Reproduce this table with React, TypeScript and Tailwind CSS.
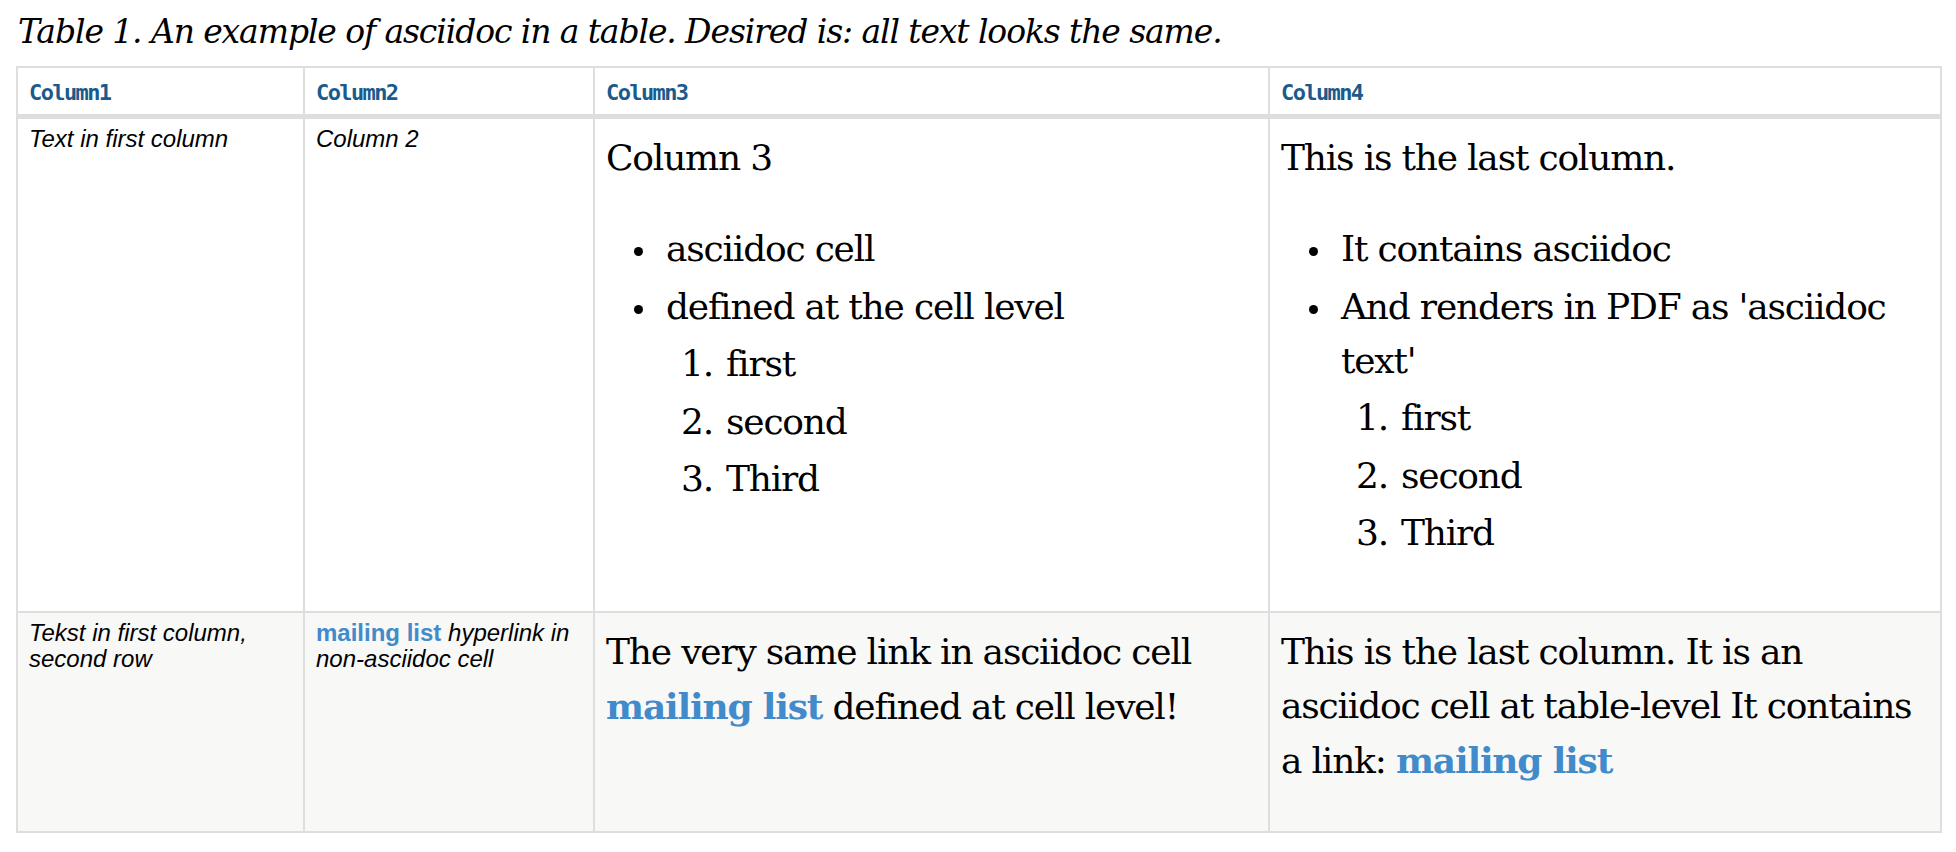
import React from "react";

function Bullet({ children }: { children: React.ReactNode }) {
  return (
    <div className="flex mt-[3.5px]">
      <div className="w-[60px] shrink-0 pt-[25px] pl-[28px]">
        <div className="w-[9px] h-[9px] rounded-full bg-black" />
      </div>
      <div className="flex-1 min-w-0">{children}</div>
    </div>
  );
}

function Num({ n, children }: { n: number; children: React.ReactNode }) {
  return (
    <div className="flex mt-[3.5px]">
      <div className="w-[60px] shrink-0 pl-[15px]">{n}.</div>
      <div className="flex-1 min-w-0">{children}</div>
    </div>
  );
}

function HeadCell({ children }: { children: React.ReactNode }) {
  return (
    <div className="border-b-[5px] border-r-2 border-[#dedede] bg-white px-[11px] pt-[12px] font-['DejaVu_Sans_Mono',monospace] font-bold text-[22px] leading-[25px] tracking-[-1.6px] text-[#1a5a8c]">
      {children}
    </div>
  );
}

export default function App() {
  return (
    <div className="min-h-screen bg-white text-black pl-[16px] pt-[9px]">
      <div className="font-['DejaVu_Serif',serif] italic text-[33px] leading-[46px] tracking-[-1.1px] pl-[2px] mb-[11px] text-black">
        Table 1. An example of asciidoc in a table. Desired is: all text looks the same.
      </div>

      <div className="grid w-[1926px] grid-cols-[287px_290px_675px_672px] grid-rows-[51px_494px_220px] border-l-2 border-t-2 border-[#dedede]">
        {/* header */}
        <HeadCell>Column1</HeadCell>
        <HeadCell>Column2</HeadCell>
        <HeadCell>Column3</HeadCell>
        <HeadCell>Column4</HeadCell>

        {/* row 1 */}
        <div className="border-r-2 border-b-2 border-[#dedede] bg-white px-[11px] pt-[7px] font-['Liberation_Sans',Arial,sans-serif] italic text-[24px] leading-[26px]">
          Text in first column
        </div>
        <div className="border-r-2 border-b-2 border-[#dedede] bg-white px-[11px] pt-[7px] font-['Liberation_Sans',Arial,sans-serif] italic text-[24px] leading-[26px]">
          Column 2
        </div>
        <div className="border-r-2 border-b-2 border-[#dedede] bg-white px-[11px] pt-[12px] font-['DejaVu_Serif',serif] text-[36px] leading-[54px] tracking-[-1.2px]">
          <p className="mb-[37px]">Column 3</p>
          <div>
            <Bullet>asciidoc cell</Bullet>
            <Bullet>
              defined at the cell level
              <div>
                <Num n={1}>first</Num>
                <Num n={2}>second</Num>
                <Num n={3}>Third</Num>
              </div>
            </Bullet>
          </div>
        </div>
        <div className="border-r-2 border-b-2 border-[#dedede] bg-white px-[11px] pt-[12px] font-['DejaVu_Serif',serif] text-[36px] leading-[54px] tracking-[-1.2px]">
          <p className="mb-[37px]">This is the last column.</p>
          <div>
            <Bullet>It contains asciidoc</Bullet>
            <Bullet>
              And renders in PDF as 'asciidoc text'
              <div>
                <Num n={1}>first</Num>
                <Num n={2}>second</Num>
                <Num n={3}>Third</Num>
              </div>
            </Bullet>
          </div>
        </div>

        {/* row 2 */}
        <div className="border-r-2 border-b-2 border-[#dedede] bg-[#f8f8f7] px-[11px] pt-[7px] font-['Liberation_Sans',Arial,sans-serif] italic text-[24px] leading-[26px]">
          Tekst in first column, second row
        </div>
        <div className="border-r-2 border-b-2 border-[#dedede] bg-[#f8f8f7] px-[11px] pt-[7px] font-['Liberation_Sans',Arial,sans-serif] text-[24px] leading-[26px]">
          <span className="font-bold text-[#428bca]">mailing list</span>
          <span className="italic"> hyperlink in non-asciidoc cell</span>
        </div>
        <div className="border-r-2 border-b-2 border-[#dedede] bg-[#f8f8f7] px-[11px] pt-[12px] font-['DejaVu_Serif',serif] text-[36px] leading-[54px] tracking-[-1.2px]">
          <p>
            The very same link in asciidoc cell{" "}
            <span className="font-bold text-[#428bca]">mailing list</span> defined at cell level!
          </p>
        </div>
        <div className="border-r-2 border-b-2 border-[#dedede] bg-[#f8f8f7] px-[11px] pt-[12px] font-['DejaVu_Serif',serif] text-[36px] leading-[54px] tracking-[-1.2px]">
          <p>
            This is the last column. It is an asciidoc cell at table-level It contains a link:{" "}
            <span className="font-bold text-[#428bca]">mailing list</span>
          </p>
        </div>
      </div>
    </div>
  );
}
